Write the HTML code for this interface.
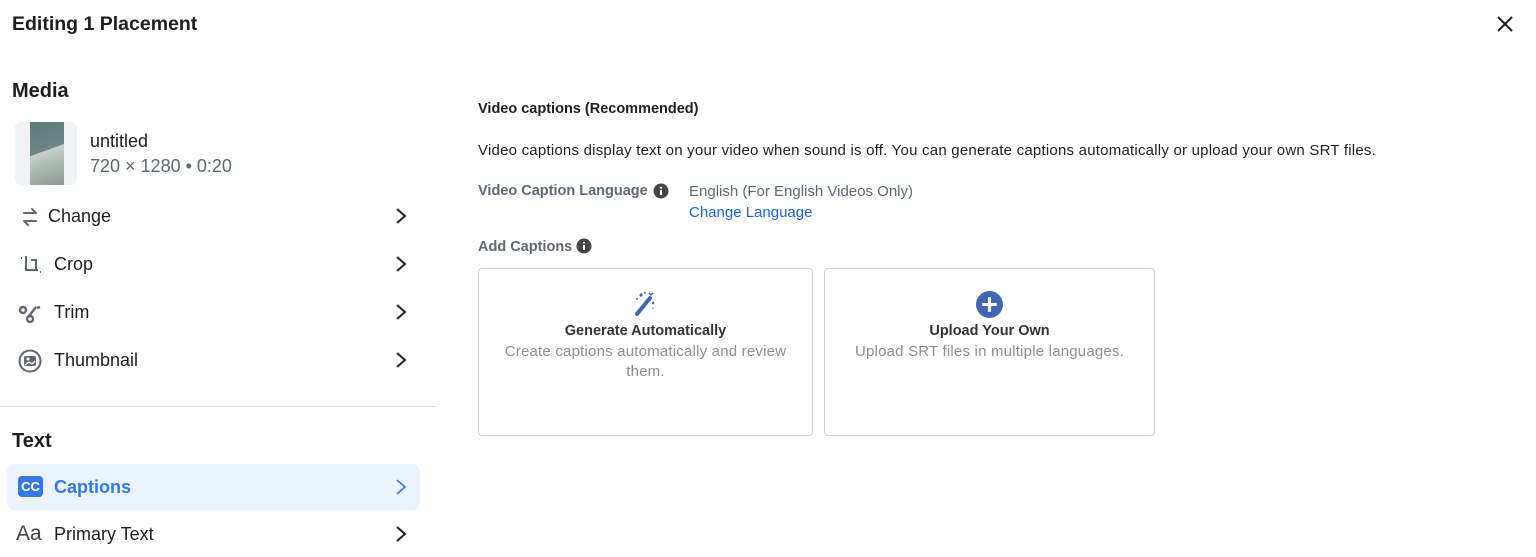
<!DOCTYPE html>
<html><head><meta charset="utf-8"><style>
*{margin:0;padding:0;box-sizing:border-box}
body{width:1536px;height:555px;background:#fff;font-family:"Liberation Sans",sans-serif;color:#1c1e21;position:relative;overflow:hidden}
.a{position:absolute;white-space:nowrap}
.b{font-weight:bold}
.row{position:absolute;left:0;width:420px;height:46px}
.row .ic{position:absolute;left:18px;top:12px;width:24px;height:24px}
.row .t{position:absolute;left:54px;top:13px;font-size:18px;color:#1c1e21}
.row .ch{position:absolute;left:394px;top:14px}
.card{position:absolute;top:268px;height:168px;border:1px solid #ccd0d5;border-radius:4px;text-align:center}
.card .h{font-weight:bold;font-size:14.5px;color:#333;margin-top:54px}
.card .s{font-size:15px;color:#8a8d91;line-height:20px;margin-top:3px;padding:0 20px;letter-spacing:0.2px}
</style></head><body>
<div class="a b" style="left:12px;top:13px;font-size:19.5px">Editing 1 Placement</div>
<svg class="a" style="left:1496px;top:15px" width="18" height="18" viewBox="0 0 18 18"><path d="M2 2L16 16M16 2L2 16" stroke="#1c1e21" stroke-width="2"/></svg>

<div class="a b" style="left:12px;top:80px;font-size:20px">Media</div>
<div class="a" style="left:15px;top:122px;width:62px;height:63px;background:#f0f2f5;border-radius:6px"></div>
<div class="a" style="left:30px;top:122px;width:34px;height:63px;background:linear-gradient(160deg,#5f7778 0%,#6d8787 45%,#c9cfca 46%,#a9b5ad 70%,#8a9a92 100%)"></div>
<div class="a" style="left:90px;top:131px;font-size:18px">untitled</div>
<div class="a" style="left:90px;top:156px;font-size:18px;color:#606770">720 × 1280 • 0:20</div>

<div class="row" style="top:193px"><svg class="ic" viewBox="0 0 24 24"><path d="M6 8h12M14 4l4 4M18 16H6M10 20l-4-4" stroke="#606770" stroke-width="2" fill="none" stroke-linecap="round"/></svg><div class="t" style="left:48px">Change</div><svg class="ch" width="14" height="18" viewBox="0 0 14 18"><path d="M3 2l8 7-8 7" stroke="#1c1e21" stroke-width="2" fill="none"/></svg></div>
<div class="row" style="top:241px"><svg class="ic" viewBox="0 0 24 24"><path d="M3 5h1M8 3v14h12M13 7h5v11M22 19h1" stroke="#606770" stroke-width="2" fill="none"/></svg><div class="t">Crop</div><svg class="ch" width="14" height="18" viewBox="0 0 14 18"><path d="M3 2l8 7-8 7" stroke="#1c1e21" stroke-width="2" fill="none"/></svg></div>
<div class="row" style="top:289px"><svg class="ic" viewBox="0 0 24 24"><circle cx="5" cy="9" r="3" stroke="#606770" stroke-width="2.4" fill="none"/><circle cx="12" cy="18" r="3" stroke="#606770" stroke-width="2.4" fill="none"/><path d="M11 15L18 6M19 7l3-1" stroke="#606770" stroke-width="2.4" fill="none"/></svg><div class="t">Trim</div><svg class="ch" width="14" height="18" viewBox="0 0 14 18"><path d="M3 2l8 7-8 7" stroke="#1c1e21" stroke-width="2" fill="none"/></svg></div>
<div class="row" style="top:337px"><svg class="ic" viewBox="0 0 24 24"><circle cx="12" cy="12" r="10.5" stroke="#606770" stroke-width="2" fill="none"/><rect x="6" y="7" width="12" height="10" rx="2" fill="#606770"/><circle cx="10" cy="10" r="1.5" fill="#fff"/><path d="M7 16l4-3 3 2 3-3" stroke="#fff" stroke-width="1.3" fill="none"/></svg><div class="t">Thumbnail</div><svg class="ch" width="14" height="18" viewBox="0 0 14 18"><path d="M3 2l8 7-8 7" stroke="#1c1e21" stroke-width="2" fill="none"/></svg></div>

<div class="a" style="left:0;top:406px;width:436px;height:1px;background:#dadde1"></div>
<div class="a b" style="left:12px;top:430px;font-size:20px">Text</div>
<div class="a" style="left:7px;top:464px;width:413px;height:46px;background:#ebf3ff;border-radius:8px"></div>
<div class="row" style="top:464px"><div class="ic" style="left:18px;top:12px;width:25px;height:21px;background:#3578e5;border-radius:4px;color:#fff;font-weight:bold;font-size:13px;text-align:center;line-height:21px">CC</div><div class="t b" style="color:#3578e5">Captions</div><svg class="ch" width="14" height="18" viewBox="0 0 14 18"><path d="M3 2l8 7-8 7" stroke="#3578e5" stroke-width="1.6" fill="none"/></svg></div>
<div class="row" style="top:511px"><div class="a" style="left:16px;top:11px;font-size:21px;color:#444">Aa</div><div class="t">Primary Text</div><svg class="ch" width="14" height="18" viewBox="0 0 14 18"><path d="M3 2l8 7-8 7" stroke="#1c1e21" stroke-width="2" fill="none"/></svg></div>

<div class="a b" style="left:478px;top:101px;font-size:14.5px">Video captions (Recommended)</div>
<div class="a" style="left:478px;top:142px;font-size:15px;letter-spacing:0.22px">Video captions display text on your video when sound is off. You can generate captions automatically or upload your own SRT files.</div>
<div class="a b" style="left:478px;top:183px;font-size:14.5px;color:#606770">Video Caption Language</div>
<svg class="a" style="left:653px;top:183px" width="16" height="16" viewBox="0 0 16 16"><circle cx="8" cy="8" r="7.5" fill="#444"/><rect x="7" y="7" width="2" height="5" fill="#fff"/><circle cx="8" cy="4.7" r="1.1" fill="#fff"/></svg>
<div class="a" style="left:689px;top:183px;font-size:15px;color:#606770">English (For English Videos Only)</div>
<div class="a" style="left:689px;top:204px;font-size:15px;color:#1d5fd6">Change Language</div>
<div class="a b" style="left:478px;top:239px;font-size:14.5px;color:#606770">Add Captions</div>
<svg class="a" style="left:576px;top:238px" width="16" height="16" viewBox="0 0 16 16"><circle cx="8" cy="8" r="7.5" fill="#444"/><rect x="7" y="7" width="2" height="5" fill="#fff"/><circle cx="8" cy="4.7" r="1.1" fill="#fff"/></svg>

<div class="card" style="left:478px;width:335px">
<svg class="a" style="left:152px;top:20px" width="28" height="28" viewBox="0 0 28 28"><path d="M6 25L19 9" stroke="#4267b2" stroke-width="4" stroke-linecap="round"/><circle cx="10" cy="6" r="1.6" fill="#4267b2"/><circle cx="6" cy="10" r="1" fill="#4267b2"/><circle cx="14" cy="4" r="1" fill="#4267b2"/><circle cx="22" cy="14" r="1.3" fill="#4267b2"/><circle cx="22" cy="19" r="0.8" fill="#4267b2"/><path d="M18 4l2 2 2-2" stroke="#4267b2" stroke-width="1.5" fill="none"/></svg>
<div class="h">Generate Automatically</div><div class="s">Create captions automatically and review them.</div></div>
<div class="card" style="left:824px;width:331px">
<svg class="a" style="left:151px;top:22px" width="27" height="27" viewBox="0 0 26 26"><circle cx="13" cy="13" r="13" fill="#4267b2"/><path d="M13 6v14M6 13h14" stroke="#fff" stroke-width="3"/></svg>
<div class="h">Upload Your Own</div><div class="s">Upload SRT files in multiple languages.</div></div>
</body></html>
